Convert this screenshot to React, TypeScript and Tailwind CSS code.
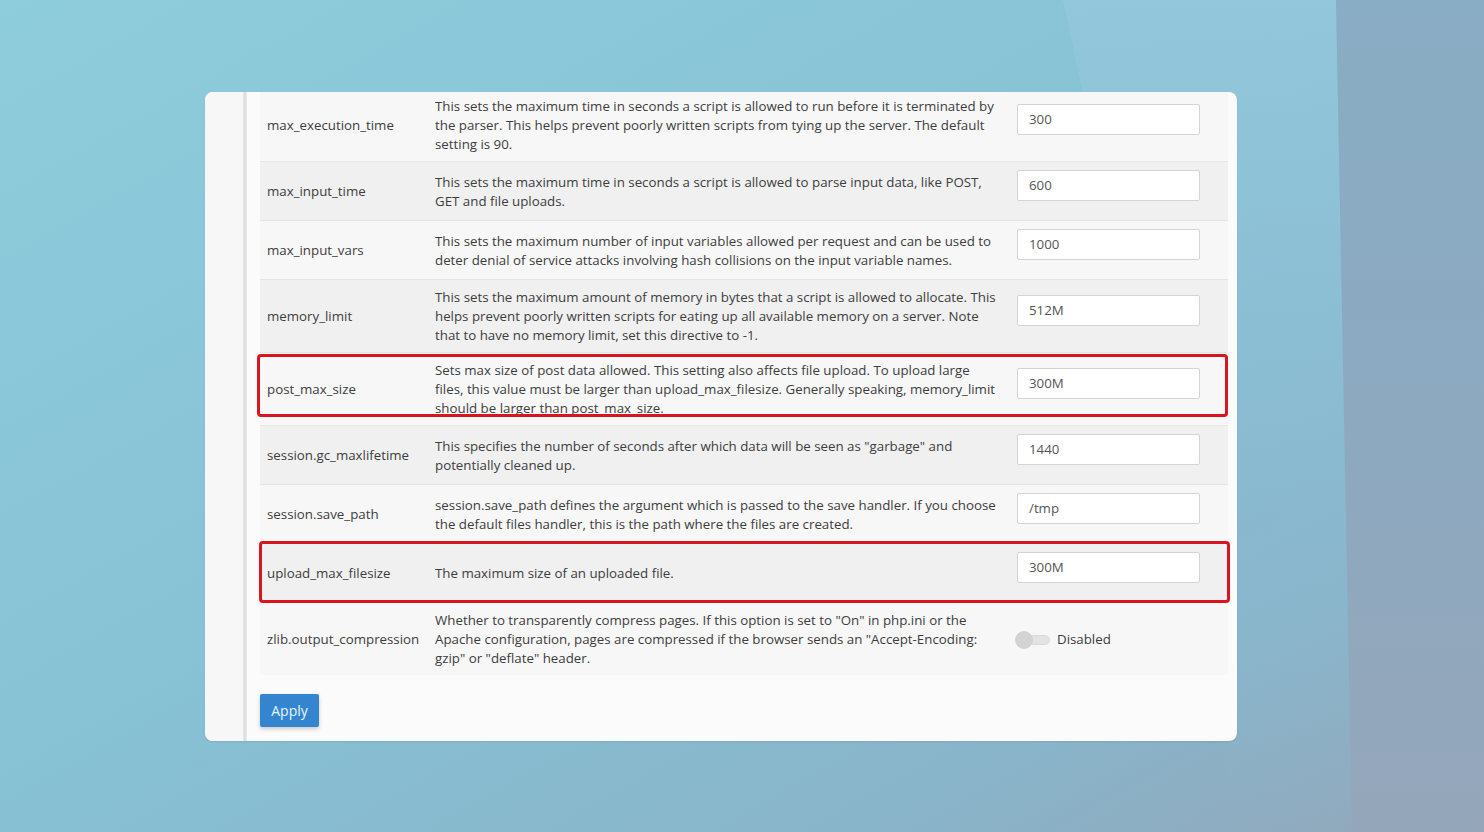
import React from "react";

type Row = {
  name: string;
  lines: string[];
  value?: string;
  toggle?: boolean;
};

const rows: Row[] = [
  {
    name: "max_execution_time",
    lines: [
      "This sets the maximum time in seconds a script is allowed to run before it is terminated by",
      "the parser. This helps prevent poorly written scripts from tying up the server. The default",
      "setting is 90.",
    ],
    value: "300",
  },
  {
    name: "max_input_time",
    lines: [
      "This sets the maximum time in seconds a script is allowed to parse input data, like POST,",
      "GET and file uploads.",
    ],
    value: "600",
  },
  {
    name: "max_input_vars",
    lines: [
      "This sets the maximum number of input variables allowed per request and can be used to",
      "deter denial of service attacks involving hash collisions on the input variable names.",
    ],
    value: "1000",
  },
  {
    name: "memory_limit",
    lines: [
      "This sets the maximum amount of memory in bytes that a script is allowed to allocate. This",
      "helps prevent poorly written scripts for eating up all available memory on a server. Note",
      "that to have no memory limit, set this directive to -1.",
    ],
    value: "512M",
  },
  {
    name: "post_max_size",
    lines: [
      "Sets max size of post data allowed. This setting also affects file upload. To upload large",
      "files, this value must be larger than upload_max_filesize. Generally speaking, memory_limit",
      "should be larger than post_max_size.",
    ],
    value: "300M",
  },
  {
    name: "session.gc_maxlifetime",
    lines: [
      'This specifies the number of seconds after which data will be seen as "garbage" and',
      "potentially cleaned up.",
    ],
    value: "1440",
  },
  {
    name: "session.save_path",
    lines: [
      "session.save_path defines the argument which is passed to the save handler. If you choose",
      "the default files handler, this is the path where the files are created.",
    ],
    value: "/tmp",
  },
  {
    name: "upload_max_filesize",
    lines: ["The maximum size of an uploaded file."],
    value: "300M",
  },
  {
    name: "zlib.output_compression",
    lines: [
      'Whether to transparently compress pages. If this option is set to "On" in php.ini or the',
      'Apache configuration, pages are compressed if the browser sends an "Accept-Encoding:',
      'gzip" or "deflate" header.',
    ],
    toggle: true,
  },
];

function Background() {
  return (
    <svg
      className="absolute inset-0"
      width="1484"
      height="832"
      viewBox="0 0 1484 832"
    >
      <defs>
        <linearGradient id="bgBase" x1="0" y1="0" x2="1" y2="1">
          <stop offset="0" stopColor="#8ecddc" />
          <stop offset="0.45" stopColor="#87c2d5" />
          <stop offset="0.8" stopColor="#89b4c9" />
          <stop offset="1" stopColor="#93a6ba" />
        </linearGradient>
        <linearGradient id="bgBand" x1="0" y1="0" x2="0" y2="1">
          <stop offset="0" stopColor="#93c7dc" stopOpacity="0.9" />
          <stop offset="0.6" stopColor="#8cbdd5" stopOpacity="0.35" />
          <stop offset="1" stopColor="#8cbdd5" stopOpacity="0" />
        </linearGradient>
        <linearGradient id="bgRight" x1="0" y1="0" x2="0" y2="1">
          <stop offset="0" stopColor="#89adc4" />
          <stop offset="0.5" stopColor="#8ca9c0" />
          <stop offset="1" stopColor="#95a6ba" />
        </linearGradient>
      </defs>
      <rect x="0" y="0" width="1484" height="832" fill="url(#bgBase)" />
      <polygon points="1063,0 1336,0 1352,832 1240,832" fill="url(#bgBand)" />
      <polygon points="1336,0 1484,0 1484,832 1352,832" fill="url(#bgRight)" />
    </svg>
  );
}

function Toggle() {
  return (
    <div className="flex items-center -ml-[2px]">
      <div className="relative w-[35px] h-[18px]">
        <div className="absolute left-[9px] top-[4px] w-[26px] h-[10px] rounded-full bg-[#e3e3e3] border border-[#d9d9d9]" />
        <div className="absolute left-0 top-0 w-[18px] h-[18px] rounded-full bg-[#d3d3d3]" />
      </div>
      <span className="ml-[7px] text-[13.3px] leading-[19px] text-[#3d3d3d]">
        Disabled
      </span>
    </div>
  );
}

export default function App() {
  return (
    <div className="relative w-[1484px] h-[832px] overflow-hidden font-['Open_Sans','Noto_Sans',sans-serif]">
      <Background />
      <div className="relative pl-[205px] pt-[92px]">
        <div className="relative flex w-[1032px] h-[649px] rounded-[8px] bg-[#fbfbfb] overflow-hidden shadow-[0_1px_2px_rgba(0,0,0,0.08)]">
          <div className="w-[38px] bg-[#f7f7f7]" />
          <div className="w-[4px] bg-[linear-gradient(to_right,#e9e9e9,#dcdcdc,#ececec)]" />
          <div className="flex-1 pl-[13px] pr-[9px]">
            <div className="flex flex-col">
              {rows.map((r, i) => (
                <div
                  key={r.name}
                  className={
                    (i === 0
                      ? "pt-[5px] "
                      : "pt-[8px] border-t border-[#e6e6e6] ") +
                    "pb-[7px] flex items-center text-[13.3px] leading-[19px] text-[#3d3d3d] " +
                    (i % 2 === 1 ? "bg-[#f0f0f0]" : "bg-[#f7f7f7]")
                  }
                >
                  <div className="w-[168px] px-[7px] whitespace-nowrap">
                    {r.name}
                  </div>
                  <div className="w-[582px] px-[7px]">
                    {r.lines.map((l, j) => (
                      <span key={j} className="block whitespace-nowrap">
                        {l}
                      </span>
                    ))}
                  </div>
                  <div className="w-[218px] pl-[7px]">
                    {r.toggle ? (
                      <Toggle />
                    ) : (
                      <div className="pb-[12px]">
                        <div className="w-[183px] h-[31px] bg-white border border-[#d4d4d4] rounded-[2px] flex items-center pl-[11px] text-[13.3px] text-[#555]">
                          {r.value}
                        </div>
                      </div>
                    )}
                  </div>
                </div>
              ))}
            </div>
            <div className="pt-[19px]">
              <button className="w-[59px] h-[33px] rounded-[2px] bg-[#3385d0] text-[14px] text-[#eaf4ff] shadow-[0_2px_4px_rgba(0,0,0,0.2)]">
                Apply
              </button>
            </div>
          </div>

          <div className="absolute left-[52px] top-[262px] w-[971px] h-[63px] border-[3px] border-[#d9161f] rounded-[4px]" />
          <div className="absolute left-[54px] top-[449px] w-[971px] h-[62px] border-[3px] border-[#d9161f] rounded-[4px]" />
        </div>
      </div>
    </div>
  );
}
